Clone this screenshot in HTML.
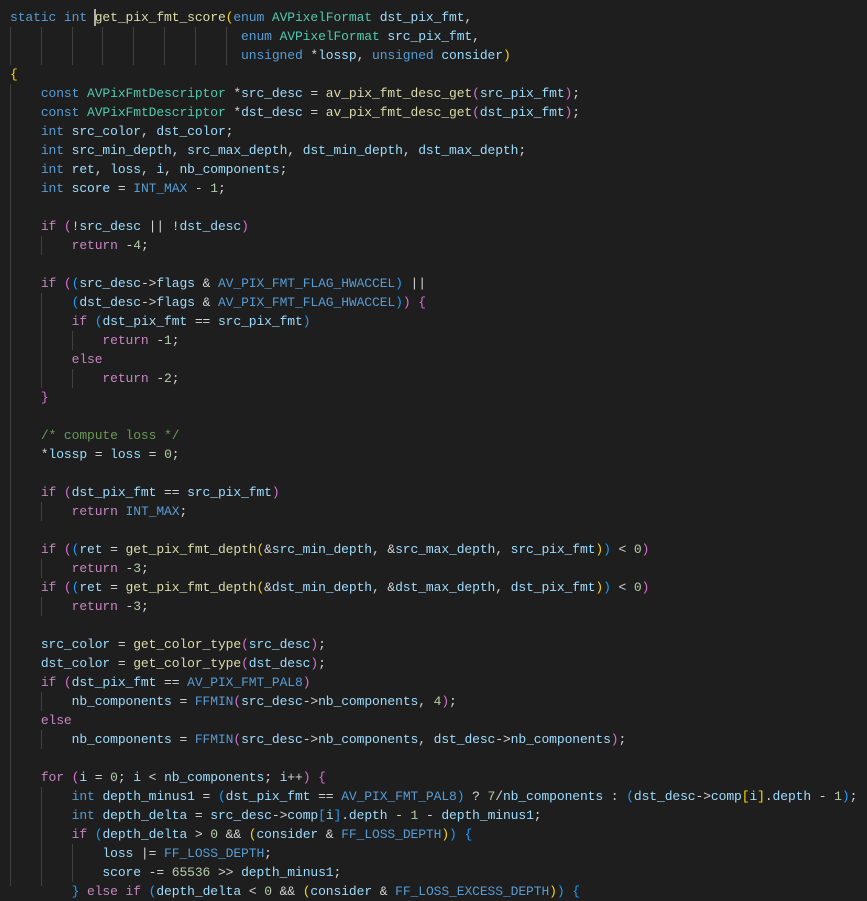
<!DOCTYPE html>
<html><head><meta charset="utf-8"><style>
body{margin:0;background:#1e1e1e;width:867px;height:886px;overflow:hidden;position:relative}
pre{margin:0;position:absolute;left:10px;top:8px;font-family:"Liberation Mono",monospace;font-size:13px;letter-spacing:-0.1px;line-height:19px;color:#d4d4d4;white-space:pre}
.K{color:#569cd6}.C{color:#c586c0}.T{color:#4ec9b0}.V{color:#9cdcfe}.F{color:#dcdcaa}.N{color:#b5cea8}.M{color:#6a9955}.Y{color:#ffd700}.P{color:#da70d6}.B{color:#179fff}
.g{position:absolute;width:1px;background:#404040}
.cur{position:absolute;left:94px;top:9px;width:2px;height:17px;background:#aeafad}
</style></head><body>
<div class="g" style="left:10px;top:27px;height:38px"></div>
<div class="g" style="left:41px;top:27px;height:38px"></div>
<div class="g" style="left:72px;top:27px;height:38px"></div>
<div class="g" style="left:102px;top:27px;height:38px"></div>
<div class="g" style="left:133px;top:27px;height:38px"></div>
<div class="g" style="left:164px;top:27px;height:38px"></div>
<div class="g" style="left:195px;top:27px;height:38px"></div>
<div class="g" style="left:226px;top:27px;height:38px"></div>
<div class="g" style="left:10px;top:84px;height:802px"></div>
<div class="g" style="left:41px;top:236px;height:19px"></div>
<div class="g" style="left:41px;top:293px;height:95px"></div>
<div class="g" style="left:72px;top:331px;height:19px"></div>
<div class="g" style="left:72px;top:369px;height:19px"></div>
<div class="g" style="left:41px;top:502px;height:19px"></div>
<div class="g" style="left:41px;top:559px;height:19px"></div>
<div class="g" style="left:41px;top:597px;height:19px"></div>
<div class="g" style="left:41px;top:692px;height:19px"></div>
<div class="g" style="left:41px;top:730px;height:19px"></div>
<div class="g" style="left:41px;top:787px;height:99px"></div>
<div class="g" style="left:72px;top:844px;height:38px"></div>
<div class="cur"></div>
<pre><span class="K">static</span> <span class="K">int</span> <span class="F">get_pix_fmt_score</span><span class="Y">(</span><span class="K">enum</span> <span class="T">AVPixelFormat</span> <span class="V">dst_pix_fmt</span>,
                              <span class="K">enum</span> <span class="T">AVPixelFormat</span> <span class="V">src_pix_fmt</span>,
                              <span class="K">unsigned</span> *<span class="V">lossp</span>, <span class="K">unsigned</span> <span class="V">consider</span><span class="Y">)</span>
<span class="Y">{</span>
    <span class="K">const</span> <span class="T">AVPixFmtDescriptor</span> *<span class="V">src_desc</span> = <span class="F">av_pix_fmt_desc_get</span><span class="P">(</span><span class="V">src_pix_fmt</span><span class="P">)</span>;
    <span class="K">const</span> <span class="T">AVPixFmtDescriptor</span> *<span class="V">dst_desc</span> = <span class="F">av_pix_fmt_desc_get</span><span class="P">(</span><span class="V">dst_pix_fmt</span><span class="P">)</span>;
    <span class="K">int</span> <span class="V">src_color</span>, <span class="V">dst_color</span>;
    <span class="K">int</span> <span class="V">src_min_depth</span>, <span class="V">src_max_depth</span>, <span class="V">dst_min_depth</span>, <span class="V">dst_max_depth</span>;
    <span class="K">int</span> <span class="V">ret</span>, <span class="V">loss</span>, <span class="V">i</span>, <span class="V">nb_components</span>;
    <span class="K">int</span> <span class="V">score</span> = <span class="K">INT_MAX</span> - <span class="N">1</span>;

    <span class="C">if</span> <span class="P">(</span>!<span class="V">src_desc</span> || !<span class="V">dst_desc</span><span class="P">)</span>
        <span class="C">return</span> -<span class="N">4</span>;

    <span class="C">if</span> <span class="P">(</span><span class="B">(</span><span class="V">src_desc</span>-&gt;<span class="V">flags</span> &amp; <span class="K">AV_PIX_FMT_FLAG_HWACCEL</span><span class="B">)</span> ||
        <span class="B">(</span><span class="V">dst_desc</span>-&gt;<span class="V">flags</span> &amp; <span class="K">AV_PIX_FMT_FLAG_HWACCEL</span><span class="B">)</span><span class="P">)</span> <span class="P">{</span>
        <span class="C">if</span> <span class="B">(</span><span class="V">dst_pix_fmt</span> == <span class="V">src_pix_fmt</span><span class="B">)</span>
            <span class="C">return</span> -<span class="N">1</span>;
        <span class="C">else</span>
            <span class="C">return</span> -<span class="N">2</span>;
    <span class="P">}</span>

    <span class="M">/* compute loss */</span>
    *<span class="V">lossp</span> = <span class="V">loss</span> = <span class="N">0</span>;

    <span class="C">if</span> <span class="P">(</span><span class="V">dst_pix_fmt</span> == <span class="V">src_pix_fmt</span><span class="P">)</span>
        <span class="C">return</span> <span class="K">INT_MAX</span>;

    <span class="C">if</span> <span class="P">(</span><span class="B">(</span><span class="V">ret</span> = <span class="F">get_pix_fmt_depth</span><span class="Y">(</span>&amp;<span class="V">src_min_depth</span>, &amp;<span class="V">src_max_depth</span>, <span class="V">src_pix_fmt</span><span class="Y">)</span><span class="B">)</span> &lt; <span class="N">0</span><span class="P">)</span>
        <span class="C">return</span> -<span class="N">3</span>;
    <span class="C">if</span> <span class="P">(</span><span class="B">(</span><span class="V">ret</span> = <span class="F">get_pix_fmt_depth</span><span class="Y">(</span>&amp;<span class="V">dst_min_depth</span>, &amp;<span class="V">dst_max_depth</span>, <span class="V">dst_pix_fmt</span><span class="Y">)</span><span class="B">)</span> &lt; <span class="N">0</span><span class="P">)</span>
        <span class="C">return</span> -<span class="N">3</span>;

    <span class="V">src_color</span> = <span class="F">get_color_type</span><span class="P">(</span><span class="V">src_desc</span><span class="P">)</span>;
    <span class="V">dst_color</span> = <span class="F">get_color_type</span><span class="P">(</span><span class="V">dst_desc</span><span class="P">)</span>;
    <span class="C">if</span> <span class="P">(</span><span class="V">dst_pix_fmt</span> == <span class="K">AV_PIX_FMT_PAL8</span><span class="P">)</span>
        <span class="V">nb_components</span> = <span class="K">FFMIN</span><span class="P">(</span><span class="V">src_desc</span>-&gt;<span class="V">nb_components</span>, <span class="N">4</span><span class="P">)</span>;
    <span class="C">else</span>
        <span class="V">nb_components</span> = <span class="K">FFMIN</span><span class="P">(</span><span class="V">src_desc</span>-&gt;<span class="V">nb_components</span>, <span class="V">dst_desc</span>-&gt;<span class="V">nb_components</span><span class="P">)</span>;

    <span class="C">for</span> <span class="P">(</span><span class="V">i</span> = <span class="N">0</span>; <span class="V">i</span> &lt; <span class="V">nb_components</span>; <span class="V">i</span>++<span class="P">)</span> <span class="P">{</span>
        <span class="K">int</span> <span class="V">depth_minus1</span> = <span class="B">(</span><span class="V">dst_pix_fmt</span> == <span class="K">AV_PIX_FMT_PAL8</span><span class="B">)</span> ? <span class="N">7</span>/<span class="V">nb_components</span> : <span class="B">(</span><span class="V">dst_desc</span>-&gt;<span class="V">comp</span><span class="Y">[</span><span class="V">i</span><span class="Y">]</span>.<span class="V">depth</span> - <span class="N">1</span><span class="B">)</span>;
        <span class="K">int</span> <span class="V">depth_delta</span> = <span class="V">src_desc</span>-&gt;<span class="V">comp</span><span class="B">[</span><span class="V">i</span><span class="B">]</span>.<span class="V">depth</span> - <span class="N">1</span> - <span class="V">depth_minus1</span>;
        <span class="C">if</span> <span class="B">(</span><span class="V">depth_delta</span> &gt; <span class="N">0</span> &amp;&amp; <span class="Y">(</span><span class="V">consider</span> &amp; <span class="K">FF_LOSS_DEPTH</span><span class="Y">)</span><span class="B">)</span> <span class="B">{</span>
            <span class="V">loss</span> |= <span class="K">FF_LOSS_DEPTH</span>;
            <span class="V">score</span> -= <span class="N">65536</span> &gt;&gt; <span class="V">depth_minus1</span>;
        <span class="B">}</span> <span class="C">else if</span> <span class="B">(</span><span class="V">depth_delta</span> &lt; <span class="N">0</span> &amp;&amp; <span class="Y">(</span><span class="V">consider</span> &amp; <span class="K">FF_LOSS_EXCESS_DEPTH</span><span class="Y">)</span><span class="B">)</span> <span class="B">{</span></pre>
</body></html>
